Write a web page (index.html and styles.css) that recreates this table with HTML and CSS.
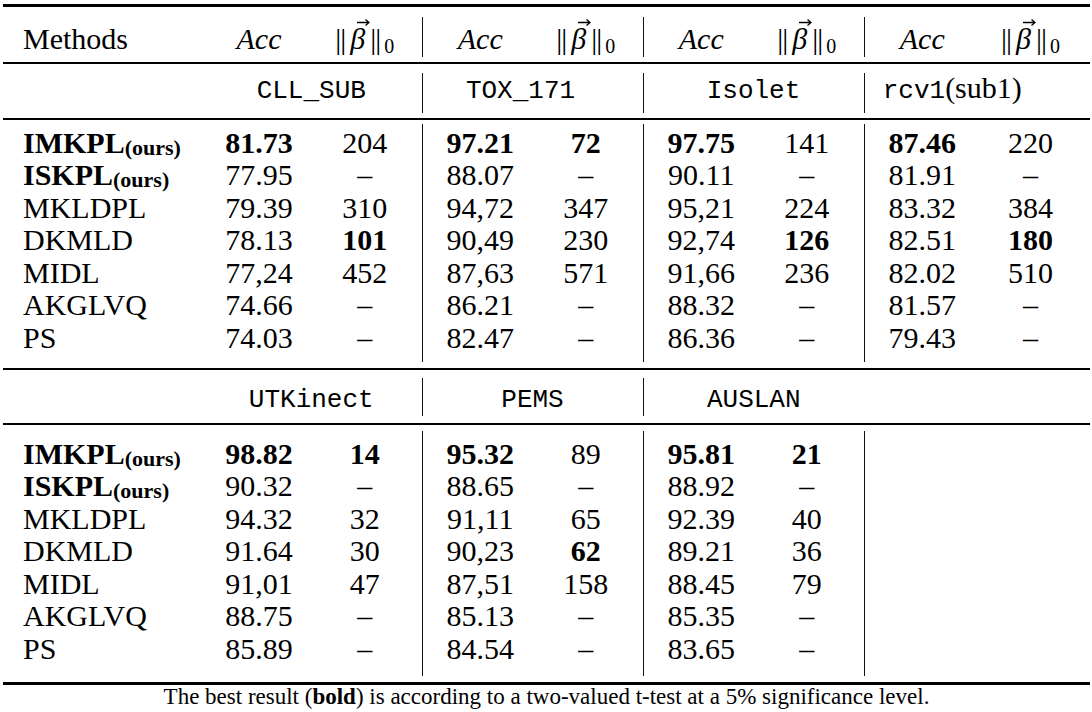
FILE: index.html
```html
<!DOCTYPE html>
<html lang="en">
<head>
  <meta charset="UTF-8" />
  <title>Results</title>
  <link rel="stylesheet" href="styles.css">
</head>
<body>
  <div class="frame">
  <table class="results">
    <colgroup>
      <col class="c-method">
      <col class="c-acc"><col class="c-beta">
      <col class="c-acc"><col class="c-beta">
      <col class="c-acc"><col class="c-beta">
      <col class="c-acc"><col class="c-beta-last">
    </colgroup>

    <tr class="head">
      <td class="method">Methods</td>
      <td><i>Acc</i></td><td class="beta"><span class="norm">||<span class="vec">β<svg class="arrow" viewBox="0 0 14 8"><path d="M1 4.5H12.5M9.5 1.5L13 4.5L9.5 7.5"/></svg></span>||<sub>0</sub></span></td>
      <td class="sep"><i>Acc</i></td><td class="beta"><span class="norm">||<span class="vec">β<svg class="arrow" viewBox="0 0 14 8"><path d="M1 4.5H12.5M9.5 1.5L13 4.5L9.5 7.5"/></svg></span>||<sub>0</sub></span></td>
      <td class="sep"><i>Acc</i></td><td class="beta"><span class="norm">||<span class="vec">β<svg class="arrow" viewBox="0 0 14 8"><path d="M1 4.5H12.5M9.5 1.5L13 4.5L9.5 7.5"/></svg></span>||<sub>0</sub></span></td>
      <td class="sep"><i>Acc</i></td><td class="beta"><span class="norm">||<span class="vec">β<svg class="arrow" viewBox="0 0 14 8"><path d="M1 4.5H12.5M9.5 1.5L13 4.5L9.5 7.5"/></svg></span>||<sub>0</sub></span></td>
    </tr>
    <tr class="rule rule-head"><td colspan="9"><div class="line"></div></td></tr>
    <tr class="dataset">
      <td></td>
      <td colspan="2"><tt>CLL_SUB</tt></td>
      <td colspan="2" class="sep tox"><tt>TOX_171</tt></td>
      <td colspan="2" class="sep"><tt>Isolet</tt></td>
      <td colspan="2" class="sep rcv"><tt>rcv1</tt>(sub1)</td>
    </tr>
    <tr class="rule rule-sub"><td colspan="9"><div class="line"></div></td></tr>

    <tr class="row first">
      <td class="method"><b>IMKPL</b><span class="ours">(ours)</span></td>
      <td class="best">81.73</td><td class="beta">204</td>
      <td class="sep best">97.21</td><td class="beta best">72</td>
      <td class="sep best">97.75</td><td class="beta">141</td>
      <td class="sep best">87.46</td><td class="beta">220</td>
    </tr>
    <tr class="row">
      <td class="method"><b>ISKPL</b><span class="ours">(ours)</span></td>
      <td>77.95</td><td class="beta">–</td>
      <td class="sep">88.07</td><td class="beta">–</td>
      <td class="sep">90.11</td><td class="beta">–</td>
      <td class="sep">81.91</td><td class="beta">–</td>
    </tr>
    <tr class="row">
      <td class="method">MKLDPL</td>
      <td>79.39</td><td class="beta">310</td>
      <td class="sep">94,72</td><td class="beta">347</td>
      <td class="sep">95,21</td><td class="beta">224</td>
      <td class="sep">83.32</td><td class="beta">384</td>
    </tr>
    <tr class="row">
      <td class="method">DKMLD</td>
      <td>78.13</td><td class="beta best">101</td>
      <td class="sep">90,49</td><td class="beta">230</td>
      <td class="sep">92,74</td><td class="beta best">126</td>
      <td class="sep">82.51</td><td class="beta best">180</td>
    </tr>
    <tr class="row">
      <td class="method">MIDL</td>
      <td>77,24</td><td class="beta">452</td>
      <td class="sep">87,63</td><td class="beta">571</td>
      <td class="sep">91,66</td><td class="beta">236</td>
      <td class="sep">82.02</td><td class="beta">510</td>
    </tr>
    <tr class="row">
      <td class="method">AKGLVQ</td>
      <td>74.66</td><td class="beta">–</td>
      <td class="sep">86.21</td><td class="beta">–</td>
      <td class="sep">88.32</td><td class="beta">–</td>
      <td class="sep">81.57</td><td class="beta">–</td>
    </tr>
    <tr class="row last">
      <td class="method">PS</td>
      <td>74.03</td><td class="beta">–</td>
      <td class="sep">82.47</td><td class="beta">–</td>
      <td class="sep">86.36</td><td class="beta">–</td>
      <td class="sep">79.43</td><td class="beta">–</td>
    </tr>

    <tr class="rule rule-mid"><td colspan="9"><div class="line"></div></td></tr>
    <tr class="dataset second">
      <td></td>
      <td colspan="2"><tt>UTKinect</tt></td>
      <td colspan="2" class="sep"><tt>PEMS</tt></td>
      <td colspan="2" class="sep"><tt>AUSLAN</tt></td>
      <td colspan="2"></td>
    </tr>
    <tr class="rule rule-sub2"><td colspan="9"><div class="line"></div></td></tr>

    <tr class="row first lower">
      <td class="method"><b>IMKPL</b><span class="ours">(ours)</span></td>
      <td class="best">98.82</td><td class="beta best">14</td>
      <td class="sep best">95.32</td><td class="beta">89</td>
      <td class="sep best">95.81</td><td class="beta best">21</td>
      <td class="sep"></td><td></td>
    </tr>
    <tr class="row">
      <td class="method"><b>ISKPL</b><span class="ours">(ours)</span></td>
      <td>90.32</td><td class="beta">–</td>
      <td class="sep">88.65</td><td class="beta">–</td>
      <td class="sep">88.92</td><td class="beta">–</td>
      <td class="sep"></td><td></td>
    </tr>
    <tr class="row">
      <td class="method">MKLDPL</td>
      <td>94.32</td><td class="beta">32</td>
      <td class="sep">91,11</td><td class="beta">65</td>
      <td class="sep">92.39</td><td class="beta">40</td>
      <td class="sep"></td><td></td>
    </tr>
    <tr class="row">
      <td class="method">DKMLD</td>
      <td>91.64</td><td class="beta">30</td>
      <td class="sep">90,23</td><td class="beta best">62</td>
      <td class="sep">89.21</td><td class="beta">36</td>
      <td class="sep"></td><td></td>
    </tr>
    <tr class="row">
      <td class="method">MIDL</td>
      <td>91,01</td><td class="beta">47</td>
      <td class="sep">87,51</td><td class="beta">158</td>
      <td class="sep">88.45</td><td class="beta">79</td>
      <td class="sep"></td><td></td>
    </tr>
    <tr class="row">
      <td class="method">AKGLVQ</td>
      <td>88.75</td><td class="beta">–</td>
      <td class="sep">85.13</td><td class="beta">–</td>
      <td class="sep">85.35</td><td class="beta">–</td>
      <td class="sep"></td><td></td>
    </tr>
    <tr class="row last lower">
      <td class="method">PS</td>
      <td>85.89</td><td class="beta">–</td>
      <td class="sep">84.54</td><td class="beta">–</td>
      <td class="sep">83.65</td><td class="beta">–</td>
      <td class="sep"></td><td></td>
    </tr>
  </table>
  </div>

  <p class="note">The best result (<b>bold</b>) is according to a two-valued t-test at a 5% significance level.</p>
</body>
</html>
```

FILE: styles.css
```css
body {
  margin: 0;
  background-color: #fff;
  color: #000;
  font-family: "Liberation Serif", "Times New Roman", serif;
}

/* top and bottom rules */
.frame {
  width: 1087px;
  margin: 4px 0 0 3px;
  border-top: 3px solid #000;
  border-bottom: 3px solid #000;
  padding: 10px 0 6px;
}
.results {
  border-collapse: collapse;
  table-layout: fixed;
  width: 1087px;
  font-size: 30px;
}
.c-method { width: 198px; }
.c-acc { width: 116px; }
.c-beta { width: 105px; }
.c-beta-last { width: 110px; }
.results td {
  padding: 0;
  text-align: center;
  white-space: nowrap;
}
.results td.method {
  text-align: left;
  padding-left: 20px;
}
.results td.beta {
  padding-right: 9px;
}
.sep {
  border-left: 1px solid #111;
}
.best {
  font-weight: bold;
}
.ours {
  font-weight: bold;
  font-size: 22px;
  line-height: 0;
  vertical-align: -2px;
}

/* middle rules with the gaps around them */
.line {
  height: 2px;
  background-color: #000;
}
.rule-head td { padding: 5px 0 9px; }
.rule-sub td { padding: 5px 0 4px; }
.rule-mid td { padding: 6px 0 8.5px; }
.rule-sub2 td { padding: 6.5px 0 6px; }

.results .head td {
  height: 38px;
  line-height: 37px;
  padding-top: 2px;
}
.results .dataset td {
  line-height: 30px;
  padding-bottom: 7px;
}
.results .dataset td.tox { padding-right: 24px; }
.results .dataset td.rcv { padding-right: 50px; }
.results .dataset.second td {
  line-height: 32px;
  padding: 3px 0 0;
}
.row td { line-height: 32.5px; }
.results .row.first td { padding-top: 2.75px; }
.results .row.last td { padding-bottom: 7.25px; }
.results .row.first.lower td { padding-top: 7.25px; }
.results .row.last.lower td { padding-bottom: 10.75px; }

tt {
  font-family: "Liberation Mono", "Courier New", monospace;
  font-size: 26px;
}

.norm {
  letter-spacing: -1px;
}
.norm sub {
  font-size: 20px;
  line-height: 0;
  vertical-align: -4px;
  letter-spacing: 0;
  margin-left: 4px;
}
.vec {
  position: relative;
  font-style: italic;
  letter-spacing: 0;
  margin: 0 5px 0 5px;
}
.arrow {
  position: absolute;
  left: 6px;
  top: -4px;
  width: 14px;
  height: 8px;
  fill: none;
  stroke: #000;
  stroke-width: 1.3;
}

.note {
  width: 1087px;
  margin: 0 0 0 3px;
  text-align: center;
  font-size: 23px;
  line-height: 24px;
}
```
